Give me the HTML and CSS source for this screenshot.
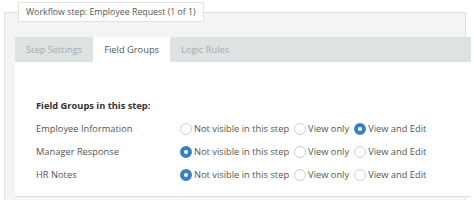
FILE: index.html
```html
<!DOCTYPE html>
<html lang="en">
<head>
    <meta charset="UTF-8">
    <title>Workflow step</title>
    <link rel="stylesheet" href="styles.css">
</head>
<body>
    <fieldset class="step-frame">
        <legend class="step-legend">Workflow step: Employee Request (1 of 1)</legend>
        <div class="tabs">
            <div class="tab">Step Settings</div>
            <div class="tab active">Field Groups</div>
            <div class="tab">Logic Rules</div>
        </div>
        <div class="tab-panel">
            <h3 class="panel-title">Field Groups in this step:</h3>
            <div class="group-row">
                <span class="group-name">Employee Information</span>
                <label class="choice"><input type="radio" name="emp">Not visible in this step</label>
                <label class="choice"><input type="radio" name="emp">View only</label>
                <label class="choice"><input type="radio" name="emp" checked>View and Edit</label>
            </div>
            <div class="group-row">
                <span class="group-name">Manager Response</span>
                <label class="choice"><input type="radio" name="mgr" checked>Not visible in this step</label>
                <label class="choice"><input type="radio" name="mgr">View only</label>
                <label class="choice"><input type="radio" name="mgr">View and Edit</label>
            </div>
            <div class="group-row">
                <span class="group-name">HR Notes</span>
                <label class="choice"><input type="radio" name="hr" checked>Not visible in this step</label>
                <label class="choice"><input type="radio" name="hr">View only</label>
                <label class="choice"><input type="radio" name="hr">View and Edit</label>
            </div>
        </div>
    </fieldset>
</body>
</html>
```

FILE: styles.css
```css
body {
    margin: 0;
    background-color: #fff;
    font-family: "Open Sans", "Liberation Sans", sans-serif;
    font-size: 9.3px;
    color: #555;
}
.step-frame {
    margin: 2px 8px 0 4px;
    padding: 15px 0 0 10px;
    border: 1px solid #e2e2e2;
    border-bottom: none;
    background-color: #f4f4f4;
    height: 198px;
    box-sizing: border-box;
}
.step-legend {
    background-color: #fff;
    border: 1px solid #e2e2e2;
    padding: 3px 7px;
    margin-left: 3px;
    font-size: 8.8px;
    color: #555;
}
.tabs {
    display: flex;
    background-color: #dde3e3;
    margin-right: -6px;
}
.tab {
    padding: 6px 11px;
    color: #a4acad;
}
.tab.active {
    background-color: #fff;
    color: #555;
}
.tab-panel {
    background-color: #fff;
    padding: 37px 20px 10px 21px;
    border-bottom: 1px solid #ddd;
    margin-right: -6px;
}
.panel-title {
    margin: 0 0 5px 0;
    font-size: 9.3px;
    font-weight: bold;
    color: #333;
}
.group-row {
    display: flex;
    align-items: center;
    height: 23px;
}
.group-name {
    width: 144px;
}
.choice {
    display: flex;
    align-items: center;
    margin-right: 5px;
}
.choice input {
    appearance: none;
    width: 12px;
    height: 12px;
    margin: 0 2px 0 0;
    border: 1px solid #d0d0d0;
    border-radius: 50%;
    background-color: #fff;
    box-sizing: border-box;
}
.choice input:checked {
    border: 4px solid #3b80c3;
}
```
